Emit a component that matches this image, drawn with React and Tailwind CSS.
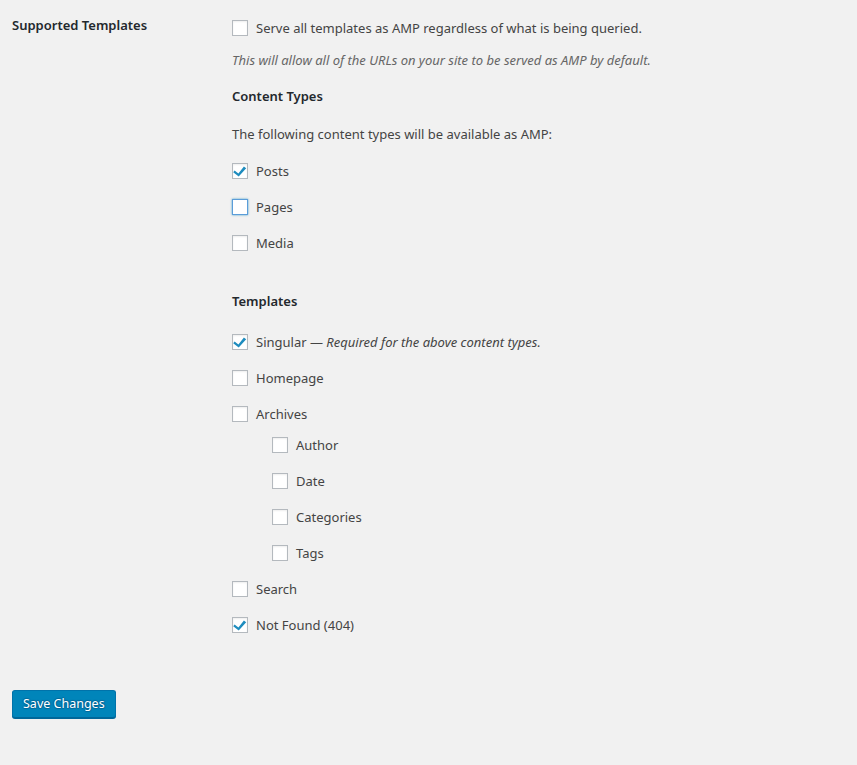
import React from "react";

function Check() {
  return (
    <svg viewBox="0 0 16 16" className="absolute -left-px -top-px w-[16px] h-[16px]">
      <path d="M2.6 7.4 L6.4 10.4 L11.9 3.4 L14.2 5.3 L6.7 13.6 L1.2 9.3 Z" fill="#1e8cbe" />
    </svg>
  );
}

function Box({ checked, focus }) {
  return (
    <span
      className={
        "relative shrink-0 w-[16px] h-[16px] bg-white border " +
        (focus
          ? "border-[#5b9dd9] shadow-[0_0_2px_rgba(30,140,190,0.8)]"
          : "border-[#b4b9be] shadow-[inset_0_1px_2px_rgba(0,0,0,0.07)]")
      }
    >
      {checked && <Check />}
    </span>
  );
}

function Row({ label, checked, focus, sub, children }) {
  return (
    <div className={"flex items-center h-[36px] " + (sub ? "pl-[40px]" : "")}>
      <Box checked={checked} focus={focus} />
      <span className="ml-[8px] text-[#444]">
        {label}
        {children}
      </span>
    </div>
  );
}

export default function App() {
  return (
    <div
      className="min-h-[765px] bg-[#f1f1f1] text-[13px] leading-[1.4] text-[#444]"
      style={{ fontFamily: '"Noto Sans", "Open Sans", sans-serif' }}
    >
      <div className="flex pt-[10px]">
        <div className="w-[232px] shrink-0 pl-[12px] pt-[7px] font-semibold text-[#23282d] leading-[1.3]">
          Supported Templates
        </div>
        <div className="flex-1">
          <Row label="Serve all templates as AMP regardless of what is being queried." />
          <p className="h-[26px] mt-[1px] flex items-center italic text-[#666]">
            This will allow all of the URLs on your site to be served as AMP by default.
          </p>
          <h4 className="mt-[13px] h-[20px] flex items-center font-semibold text-[#23282d]">Content Types</h4>
          <p className="mt-[18px] h-[20px] flex items-center">The following content types will be available as AMP:</p>
          <div className="mt-[9px]">
            <Row label="Posts" checked />
            <Row label="Pages" focus />
            <Row label="Media" />
          </div>
          <h4 className="mt-[30px] h-[20px] flex items-center font-semibold text-[#23282d]">Templates</h4>
          <div className="mt-[13px]">
            <Row label="Singular" checked>
              {" — "}
              <em className="text-[#444]">Required for the above content types.</em>
            </Row>
            <Row label="Homepage" />
            <Row label="Archives" />
            <div className="-mt-[5px]">
              <Row label="Author" sub />
              <Row label="Date" sub />
              <Row label="Categories" sub />
              <Row label="Tags" sub />
            </div>
            <Row label="Search" />
            <Row label="Not Found (404)" checked />
          </div>
        </div>
      </div>
      <div className="pl-[12px] mt-[47px]">
        <button className="h-[28px] px-[10px] rounded-[3px] bg-[#0085ba] border border-[#0073aa] border-b-[#006799] shadow-[0_1px_0_#006799] text-white text-[12.5px] leading-none [text-shadow:0_-1px_1px_#006799,1px_0_1px_#006799,0_1px_1px_#006799,-1px_0_1px_#006799]">
          Save Changes
        </button>
      </div>
    </div>
  );
}
